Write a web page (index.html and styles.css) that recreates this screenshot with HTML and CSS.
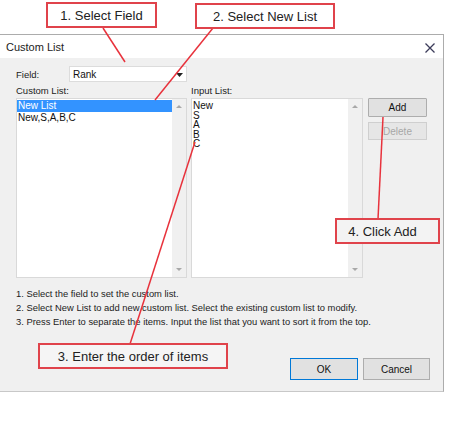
FILE: index.html
```html
<!DOCTYPE html>
<html>
<head>
<meta charset="utf-8">
<link rel="stylesheet" href="styles.css">
</head>
<body>
<div class="page">
  <div class="dialog">
    <div class="titlebar">
      <span class="title">Custom List</span>
      <svg class="close" width="10" height="10" viewBox="0 0 10 10"><path d="M0.5 0.5 L9.5 9.5 M9.5 0.5 L0.5 9.5" stroke="#3c3c5a" stroke-width="1.3" fill="none"/></svg>
    </div>
    <div class="content">
      <div class="field-row">
        <span class="label field-label">Field:</span>
        <div class="combo"><span>Rank</span><svg class="combo-arrow" width="7" height="4" viewBox="0 0 7 4"><path d="M0 0 H7 L3.5 4 Z" fill="#222"/></svg></div>
      </div>
      <div class="lists">
        <div class="col-custom">
          <div class="label">Custom List:</div>
          <div class="listbox">
            <div class="items">
              <div class="item selected">New List</div>
              <div class="item">New,S,A,B,C</div>
            </div>
            <div class="scrollbar"><span class="up"></span><span class="down"></span></div>
          </div>
        </div>
        <div class="col-input">
          <div class="label">Input List:</div>
          <div class="listbox">
            <div class="items input-items">
              <div>New</div><div>S</div><div>A</div><div>B</div><div>C</div>
            </div>
            <div class="scrollbar"><span class="up"></span><span class="down"></span></div>
          </div>
        </div>
        <div class="col-buttons">
          <button class="btn btn-add">Add</button>
          <button class="btn btn-disabled">Delete</button>
        </div>
      </div>
      <div class="help">
        <div>1. Select the field to set the custom list.</div>
        <div>2. Select New List to add new custom list. Select the existing custom list to modify.</div>
        <div>3. Press Enter to separate the items. Input the list that you want to sort it from the top.</div>
      </div>
      <div class="footer">
        <button class="btn btn-ok">OK</button>
        <button class="btn btn-cancel">Cancel</button>
      </div>
    </div>
  </div>

  <svg class="leaders" width="474" height="436" viewBox="0 0 474 436">
    <g stroke="#e8323c" stroke-width="1.5" fill="none">
      <line x1="103" y1="28" x2="125" y2="62"/>
      <line x1="213" y1="28" x2="155" y2="100"/>
      <line x1="383" y1="117" x2="378" y2="219"/>
      <line x1="195" y1="142" x2="130" y2="344"/>
    </g>
  </svg>
  <div class="callout c1">1. Select Field</div>
  <div class="callout c2">2. Select New List</div>
  <div class="callout c3">3. Enter the order of items</div>
  <div class="callout c4">4. Click Add</div>
</div>
</body>
</html>
```

FILE: styles.css
```css
* { box-sizing: border-box; }
html, body { margin: 0; padding: 0; background: #ffffff; }
body { width: 474px; height: 436px; overflow: hidden; font-family: "Liberation Sans", Arial, sans-serif; }
.page { position: relative; width: 474px; height: 436px; padding-top: 34px; }

.dialog {
  width: 444px;
  border-top: 1px solid #acacac;
  border-right: 1px solid #acacac;
  border-bottom: 1px solid #c8c8c8;
  background: #f0f0f0;
}
.titlebar {
  height: 23px;
  background: #ffffff;
  display: flex;
  align-items: center;
  justify-content: space-between;
  padding: 0 8px 0 6px;
}
.title { font-size: 11px; color: #222; }
.close { margin-top: 2px; }

.content {
  padding: 8px 13px 11px 16px;
  font-size: 9.5px;
  color: #111;
}
.label { font-size: 9.5px; color: #222; }
.field-row { display: flex; align-items: center; height: 16px; }
.field-label { width: 53px; }
.combo {
  width: 118px;
  height: 16px;
  background: #fff;
  border: 1px solid #dcdcdc;
  display: flex;
  align-items: center;
  justify-content: space-between;
  padding: 0 3px 0 3px;
  font-size: 10px;
}
.combo-arrow { margin-top: 1px; }

.lists { display: flex; margin-top: 0; }
.col-custom { width: 171px; }
.col-input { width: 172px; margin-left: 4px; }
.col-buttons { width: 59px; margin-left: 5px; padding-top: 16px; display: flex; flex-direction: column; gap: 5px; }
.lists .label { height: 16px; line-height: 16px; padding-top: 1px; }
.listbox {
  height: 180px;
  background: #fff;
  border: 1px solid #d9d9d9;
  display: flex;
}
.items { flex: 1; padding-top: 1px; font-size: 10px; }
.item { height: 12px; line-height: 12px; padding-left: 1px; color: #111; }
.item.selected { background: #3393ff; color: #fff; }
.input-items { line-height: 9.5px; padding-top: 2px; padding-left: 1px; }
.scrollbar {
  width: 14px;
  background: #f0f0f0;
  display: flex;
  flex-direction: column;
  justify-content: space-between;
  align-items: center;
  padding: 6px 0 6px;
}
.up, .down { width: 0; height: 0; border-left: 3px solid transparent; border-right: 3px solid transparent; }
.up { border-bottom: 3px solid #a8a8a8; }
.down { border-top: 3px solid #a8a8a8; }

.btn {
  font-family: "Liberation Sans", Arial, sans-serif;
  font-size: 10px;
  color: #111;
  background: #e1e1e1;
  border: 1px solid #adadad;
  padding: 0;
  margin: 0;
}
.btn-add { height: 19px; border-radius: 1px; }
.btn-disabled { height: 18px; background: #e6e6e6; border-color: #cfcfcf; color: #a6a6a6; }

.help { margin-top: 9px; font-size: 9.4px; line-height: 14px; color: #222; }

.footer { display: flex; justify-content: flex-end; gap: 5px; margin-top: 29px; }
.btn-ok { width: 68px; height: 22px; border-color: #0078d7; }
.btn-cancel { width: 67px; height: 22px; }

.leaders { position: absolute; left: 0; top: 0; pointer-events: none; }
.callout {
  position: absolute;
  border: 2px solid #e0434b;
  background: #ffffff;
  font-size: 13px;
  color: #222;
  display: flex;
  align-items: center;
  justify-content: center;
}
.c1 { left: 46px; top: 2px; width: 111px; height: 26px; }
.c2 { left: 195px; top: 3px; width: 140px; height: 26px; }
.c3 { left: 38px; top: 343px; width: 190px; height: 26px; background: #f5f5f5; }
.c4 { left: 335px; top: 218px; width: 105px; height: 26px; background: #f3f3f3; padding-right: 10px; }
```
